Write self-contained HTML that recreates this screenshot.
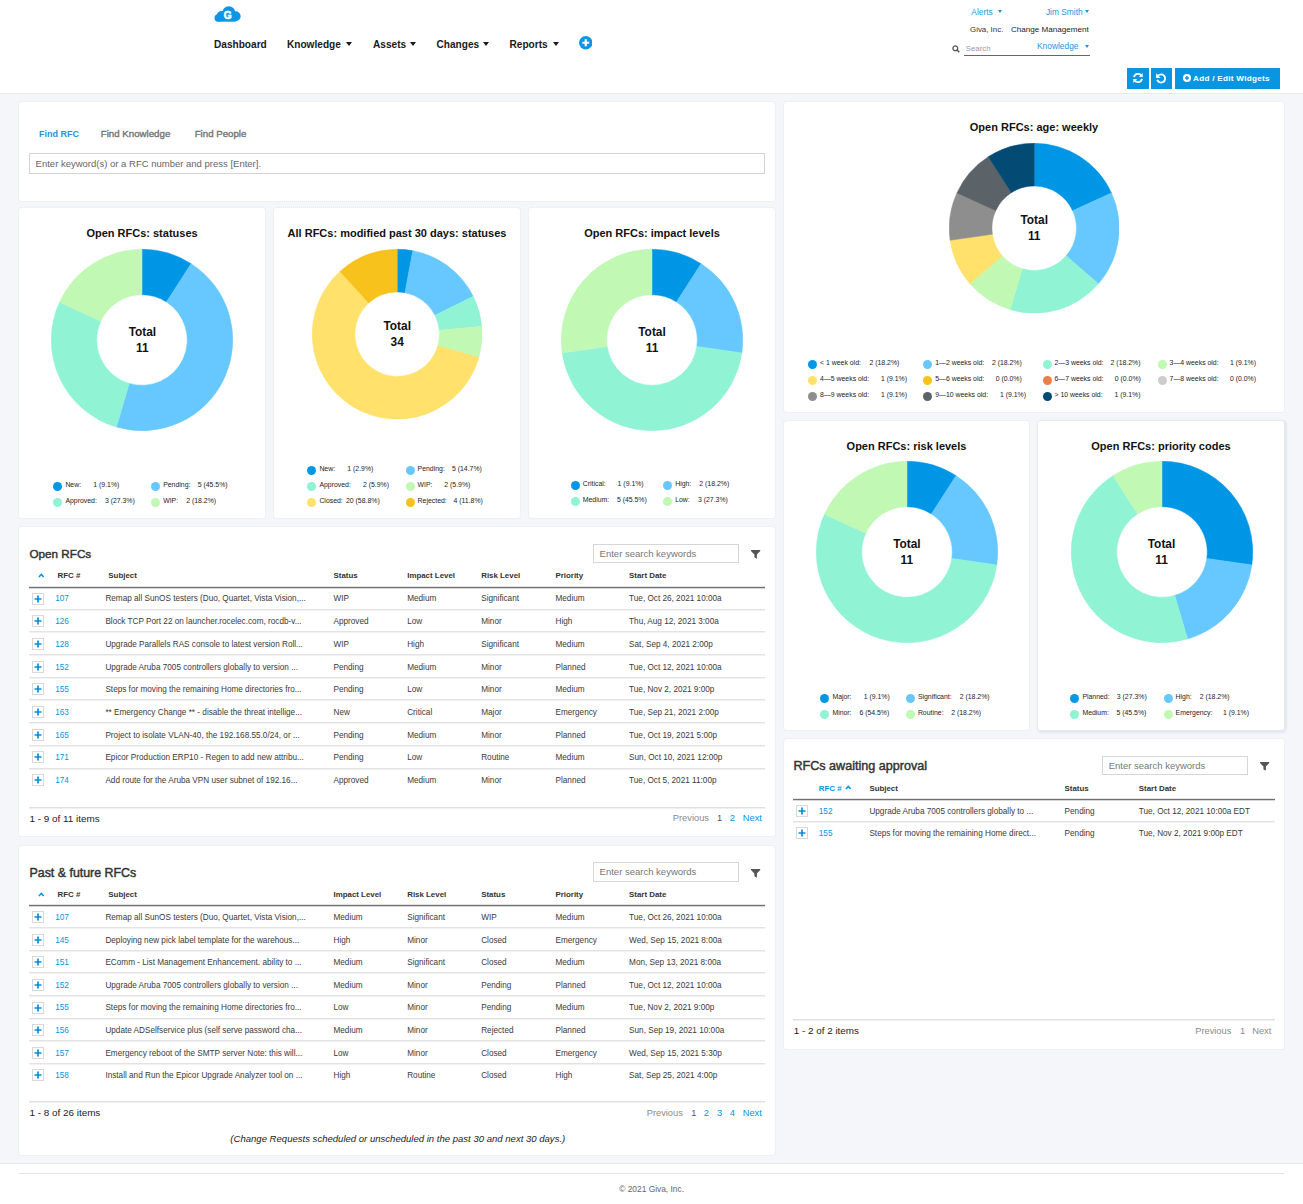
<!DOCTYPE html>
<html><head><meta charset="utf-8"><title>Giva Dashboard</title>
<style>
html,body{margin:0;padding:0;}
body{width:1303px;height:1204px;position:relative;overflow:hidden;background:#fff;font-family:"Liberation Sans",sans-serif;}
.t{position:absolute;white-space:nowrap;line-height:1;}
</style></head><body>
<div style="position:absolute;left:0;top:0;width:1303px;height:93px;background:#fff"></div><div style="position:absolute;left:0;top:93px;width:1303px;height:1px;background:#e9e9ec"></div>
<div style="position:absolute;left:0;top:94px;width:1303px;height:1069px;background:#f4f6fa"></div><div style="position:absolute;left:0;top:1163px;width:1303px;height:1px;background:#e6e7ea"></div>
<div style="position:absolute;left:18.00px;top:101.00px;width:756.00px;height:99.00px;background:#fff;background-clip:padding-box;border:1px dotted #e7eaf0;border-radius:4px;"></div>
<div style="position:absolute;left:18.00px;top:207.00px;width:246.00px;height:310.00px;background:#fff;background-clip:padding-box;border:1px dotted #e7eaf0;border-radius:4px;"></div>
<div style="position:absolute;left:273.00px;top:207.00px;width:246.00px;height:310.00px;background:#fff;background-clip:padding-box;border:1px dotted #e7eaf0;border-radius:4px;"></div>
<div style="position:absolute;left:528.00px;top:207.00px;width:246.00px;height:310.00px;background:#fff;background-clip:padding-box;border:1px dotted #e7eaf0;border-radius:4px;"></div>
<div style="position:absolute;left:783.00px;top:101.00px;width:500.00px;height:310.00px;background:#fff;background-clip:padding-box;border:1px dotted #e7eaf0;border-radius:4px;"></div>
<div style="position:absolute;left:783.00px;top:420.00px;width:245.00px;height:309.00px;background:#fff;background-clip:padding-box;border:1px dotted #e7eaf0;border-radius:4px;"></div>
<div style="position:absolute;left:1037.00px;top:420.00px;width:246.00px;height:309.00px;background:#fff;background-clip:padding-box;border:1px dotted #e7eaf0;border-radius:4px;box-shadow:1px 1px 2px 1px rgba(40,60,110,0.08);"></div>
<div style="position:absolute;left:18.00px;top:526.00px;width:756.00px;height:309.00px;background:#fff;background-clip:padding-box;border:1px dotted #e7eaf0;border-radius:4px;"></div>
<div style="position:absolute;left:18.00px;top:844.50px;width:756.00px;height:309.50px;background:#fff;background-clip:padding-box;border:1px dotted #e7eaf0;border-radius:4px;"></div>
<div style="position:absolute;left:783.00px;top:738.00px;width:500.00px;height:310.00px;background:#fff;background-clip:padding-box;border:1px dotted #e7eaf0;border-radius:4px;"></div>
<svg style="position:absolute;left:213.5px;top:6px" width="28" height="17" viewBox="0 0 28 17"><g fill="#0d95e6">
<circle cx="14.8" cy="6.6" r="6.4"/><circle cx="7.6" cy="10" r="5"/><circle cx="21.6" cy="10.3" r="5"/><circle cx="4.2" cy="12" r="3.7"/><rect x="4.2" y="8" width="17.4" height="7.7"/></g>
<text x="13.7" y="13.1" text-anchor="middle" font-family="Liberation Sans" font-weight="bold" font-size="10.2" fill="#fff" stroke="#fff" stroke-width="0.5">G</text></svg>
<div class="t" style="left:214.00px;top:40.00px;font-size:10.1px;color:#1a1a1a;font-weight:bold;">Dashboard</div>
<div class="t" style="left:287.00px;top:40.00px;font-size:10.1px;color:#1a1a1a;font-weight:bold;">Knowledge</div>
<div style="position:absolute;left:346.00px;top:42.30px;width:0;height:0;border-left:3.2px solid transparent;border-right:3.2px solid transparent;border-top:4.2px solid #1a1a1a;"></div>
<div class="t" style="left:373.00px;top:40.00px;font-size:10.1px;color:#1a1a1a;font-weight:bold;">Assets</div>
<div style="position:absolute;left:410.00px;top:42.30px;width:0;height:0;border-left:3.2px solid transparent;border-right:3.2px solid transparent;border-top:4.2px solid #1a1a1a;"></div>
<div class="t" style="left:436.50px;top:40.00px;font-size:10.1px;color:#1a1a1a;font-weight:bold;">Changes</div>
<div style="position:absolute;left:482.50px;top:42.30px;width:0;height:0;border-left:3.2px solid transparent;border-right:3.2px solid transparent;border-top:4.2px solid #1a1a1a;"></div>
<div class="t" style="left:509.50px;top:40.00px;font-size:10.1px;color:#1a1a1a;font-weight:bold;">Reports</div>
<div style="position:absolute;left:552.50px;top:42.30px;width:0;height:0;border-left:3.2px solid transparent;border-right:3.2px solid transparent;border-top:4.2px solid #1a1a1a;"></div>
<svg style="position:absolute;left:578.5px;top:36px" width="13.5" height="13.5" viewBox="0 0 13 13"><circle cx="6.5" cy="6.5" r="6.5" fill="#0d95e6"/><path d="M6.5 3.2V9.8M3.2 6.5H9.8" stroke="#fff" stroke-width="2.1"/></svg>
<div class="t" style="left:971.30px;top:8.00px;font-size:8.4px;color:#1a96e0;">Alerts</div>
<div style="position:absolute;left:998.00px;top:10.00px;width:0;height:0;border-left:2.75px solid transparent;border-right:2.75px solid transparent;border-top:3.2px solid #1a96e0;"></div>
<div class="t" style="left:1045.90px;top:8.00px;font-size:8.4px;color:#1a96e0;">Jim Smith</div>
<div style="position:absolute;left:1085.00px;top:10.00px;width:0;height:0;border-left:2.75px solid transparent;border-right:2.75px solid transparent;border-top:3.2px solid #1a96e0;"></div>
<div class="t" style="left:970.00px;top:26.00px;font-size:7.9px;color:#333;">Giva, Inc.</div>
<div class="t" style="left:1011.00px;top:26.00px;font-size:8.1px;color:#222;">Change Management</div>
<svg style="position:absolute;left:951.5px;top:45px" width="8" height="8" viewBox="0 0 8 8"><circle cx="3.3" cy="3.3" r="2.4" fill="none" stroke="#555" stroke-width="1.3"/><path d="M5.1 5.1L7.3 7.3" stroke="#555" stroke-width="1.5"/></svg>
<div class="t" style="left:965.80px;top:45.00px;font-size:7.8px;color:#9a9a9a;">Search</div>
<div class="t" style="left:1037.00px;top:42.00px;font-size:8.4px;color:#1a96e0;">Knowledge</div>
<div style="position:absolute;left:1085.00px;top:45.00px;width:0;height:0;border-left:2.75px solid transparent;border-right:2.75px solid transparent;border-top:3.2px solid #1a96e0;"></div>
<div style="position:absolute;left:964.00px;top:55.20px;width:126.00px;height:1.30px;background:#666;"></div>
<div style="position:absolute;left:1127.00px;top:68.00px;width:21.50px;height:20.50px;background:#0896e3;"></div>
<div style="position:absolute;left:1151.00px;top:68.00px;width:21.00px;height:20.50px;background:#0896e3;"></div>
<div style="position:absolute;left:1175.00px;top:68.00px;width:104.50px;height:20.50px;background:#0896e3;"></div>
<svg style="position:absolute;left:1131.5px;top:72px" width="12" height="12" viewBox="0 0 13 13"><path d="M2.2 5.6A4.4 4.4 0 0 1 10.2 4.0" fill="none" stroke="#fff" stroke-width="2"/><path d="M11.6 1.2V5.4H7.4Z" fill="#fff"/><path d="M10.8 7.4A4.4 4.4 0 0 1 2.8 9.0" fill="none" stroke="#fff" stroke-width="2"/><path d="M1.4 11.8V7.6H5.6Z" fill="#fff"/></svg>
<svg style="position:absolute;left:1155px;top:72px" width="12" height="12" viewBox="0 0 13 13"><path d="M3.2 4.2A4.4 4.4 0 1 1 2.4 8.4" fill="none" stroke="#fff" stroke-width="2"/><path d="M1.2 1.4V6.4H6.2Z" fill="#fff"/></svg>
<svg style="position:absolute;left:1182.5px;top:74px" width="8" height="8" viewBox="0 0 8 8"><circle cx="4" cy="4" r="4" fill="#fff"/><path d="M4 2V6M2 4H6" stroke="#0896e3" stroke-width="1.4"/></svg>
<div class="t" style="left:1193.00px;top:75.00px;font-size:8.1px;color:#fff;font-weight:bold;letter-spacing:0.3px;">Add / Edit Widgets</div>
<div class="t" style="left:39.00px;top:130.00px;font-size:9.0px;color:#1a96e0;font-weight:bold;">Find RFC</div>
<div class="t" style="left:100.80px;top:129.00px;font-size:9.7px;color:#737373;-webkit-text-stroke:0.35px #737373;">Find Knowledge</div>
<div class="t" style="left:194.70px;top:129.00px;font-size:9.7px;color:#737373;-webkit-text-stroke:0.35px #737373;">Find People</div>
<div style="position:absolute;left:29.00px;top:153.00px;width:736.00px;height:21.00px;border:1px solid #d4d4d4;box-sizing:border-box;"></div>
<div class="t" style="left:35.60px;top:159.00px;font-size:9.5px;color:#666;">Enter keyword(s) or a RFC number and press [Enter].</div>
<div class="t" style="left:-158.00px;width:600px;text-align:center;top:228.00px;font-size:11.0px;color:#111;font-weight:bold;">Open RFCs: statuses</div>
<svg style="position:absolute;left:51.40px;top:249.00px" width="182.00" height="182.00" viewBox="-91 -91 182 182"><path d="M0.000 -90.750A90.75 90.75 0 0 1 49.063 -76.344L24.464 -38.067A45.25 45.25 0 0 0 0.000 -45.250Z" fill="#0096e6" stroke="#0096e6" stroke-width="0.5"/><path d="M49.063 -76.344A90.75 90.75 0 0 1 -25.567 87.074L-12.748 43.417A45.25 45.25 0 0 0 24.464 -38.067Z" fill="#66c8ff" stroke="#66c8ff" stroke-width="0.5"/><path d="M-25.567 87.074A90.75 90.75 0 0 1 -82.549 -37.699L-41.161 -18.798A45.25 45.25 0 0 0 -12.748 43.417Z" fill="#90f3d4" stroke="#90f3d4" stroke-width="0.5"/><path d="M-82.549 -37.699A90.75 90.75 0 0 1 -0.000 -90.750L-0.000 -45.250A45.25 45.25 0 0 0 -41.161 -18.798Z" fill="#c1f8b4" stroke="#c1f8b4" stroke-width="0.5"/></svg>
<div class="t" style="left:-157.60px;width:600px;text-align:center;top:327.00px;font-size:11.9px;color:#111;font-weight:bold;">Total</div>
<div class="t" style="left:-157.60px;width:600px;text-align:center;top:343.00px;font-size:11.9px;color:#111;font-weight:bold;">11</div>
<div style="position:absolute;left:53.40px;top:482.10px;width:9px;height:9px;border-radius:50%;background:#0096e6"></div>
<div class="t" style="left:65.40px;top:482.00px;font-size:6.9px;color:#222;">New:</div>
<div class="t" style="left:93.30px;top:482.00px;font-size:6.9px;color:#222;">1 (9.1%)</div>
<div style="position:absolute;left:151.20px;top:482.10px;width:9px;height:9px;border-radius:50%;background:#66c8ff"></div>
<div class="t" style="left:163.20px;top:482.00px;font-size:6.9px;color:#222;">Pending:</div>
<div class="t" style="left:197.70px;top:482.00px;font-size:6.9px;color:#222;">5 (45.5%)</div>
<div style="position:absolute;left:53.40px;top:497.70px;width:9px;height:9px;border-radius:50%;background:#90f3d4"></div>
<div class="t" style="left:65.40px;top:498.00px;font-size:6.9px;color:#222;">Approved:</div>
<div class="t" style="left:104.90px;top:498.00px;font-size:6.9px;color:#222;">3 (27.3%)</div>
<div style="position:absolute;left:151.20px;top:497.70px;width:9px;height:9px;border-radius:50%;background:#c1f8b4"></div>
<div class="t" style="left:163.20px;top:498.00px;font-size:6.9px;color:#222;">WIP:</div>
<div class="t" style="left:186.20px;top:498.00px;font-size:6.9px;color:#222;">2 (18.2%)</div>
<div class="t" style="left:97.00px;width:600px;text-align:center;top:228.00px;font-size:11.0px;color:#111;font-weight:bold;">All RFCs: modified past 30 days: statuses</div>
<svg style="position:absolute;left:312.00px;top:249.10px" width="170.40" height="170.40" viewBox="-85.2 -85.2 170.4 170.4"><path d="M0.000 -84.950A84.95 84.95 0 0 1 15.610 -83.504L7.763 -41.531A42.25 42.25 0 0 0 0.000 -42.250Z" fill="#0096e6" stroke="#0096e6" stroke-width="0.5"/><path d="M15.610 -83.504A84.95 84.95 0 0 1 76.044 -37.865L37.821 -18.832A42.25 42.25 0 0 0 7.763 -41.531Z" fill="#66c8ff" stroke="#66c8ff" stroke-width="0.5"/><path d="M76.044 -37.865A84.95 84.95 0 0 1 84.588 -7.838L42.070 -3.898A42.25 42.25 0 0 0 37.821 -18.832Z" fill="#90f3d4" stroke="#90f3d4" stroke-width="0.5"/><path d="M84.588 -7.838A84.95 84.95 0 0 1 81.707 23.248L40.637 11.562A42.25 42.25 0 0 0 42.070 -3.898Z" fill="#c1f8b4" stroke="#c1f8b4" stroke-width="0.5"/><path d="M81.707 23.248A84.95 84.95 0 1 1 -57.230 -62.779L-28.464 -31.223A42.25 42.25 0 1 0 40.637 11.562Z" fill="#ffe16b" stroke="#ffe16b" stroke-width="0.5"/><path d="M-57.230 -62.779A84.95 84.95 0 0 1 -0.000 -84.950L-0.000 -42.250A42.25 42.25 0 0 0 -28.464 -31.223Z" fill="#f8c21c" stroke="#f8c21c" stroke-width="0.5"/></svg>
<div class="t" style="left:97.20px;width:600px;text-align:center;top:321.00px;font-size:11.9px;color:#111;font-weight:bold;">Total</div>
<div class="t" style="left:97.20px;width:600px;text-align:center;top:337.00px;font-size:11.9px;color:#111;font-weight:bold;">34</div>
<div style="position:absolute;left:307.40px;top:466.30px;width:9px;height:9px;border-radius:50%;background:#0096e6"></div>
<div class="t" style="left:319.40px;top:466.00px;font-size:6.9px;color:#222;">New:</div>
<div class="t" style="left:347.30px;top:466.00px;font-size:6.9px;color:#222;">1 (2.9%)</div>
<div style="position:absolute;left:405.60px;top:466.30px;width:9px;height:9px;border-radius:50%;background:#66c8ff"></div>
<div class="t" style="left:417.60px;top:466.00px;font-size:6.9px;color:#222;">Pending:</div>
<div class="t" style="left:452.00px;top:466.00px;font-size:6.9px;color:#222;">5 (14.7%)</div>
<div style="position:absolute;left:307.40px;top:482.00px;width:9px;height:9px;border-radius:50%;background:#90f3d4"></div>
<div class="t" style="left:319.40px;top:482.00px;font-size:6.9px;color:#222;">Approved:</div>
<div class="t" style="left:363.00px;top:482.00px;font-size:6.9px;color:#222;">2 (5.9%)</div>
<div style="position:absolute;left:405.60px;top:482.00px;width:9px;height:9px;border-radius:50%;background:#c1f8b4"></div>
<div class="t" style="left:417.60px;top:482.00px;font-size:6.9px;color:#222;">WIP:</div>
<div class="t" style="left:444.30px;top:482.00px;font-size:6.9px;color:#222;">2 (5.9%)</div>
<div style="position:absolute;left:307.40px;top:497.80px;width:9px;height:9px;border-radius:50%;background:#ffe16b"></div>
<div class="t" style="left:319.40px;top:498.00px;font-size:6.9px;color:#222;">Closed:</div>
<div class="t" style="left:346.00px;top:498.00px;font-size:6.9px;color:#222;">20 (58.8%)</div>
<div style="position:absolute;left:405.60px;top:497.80px;width:9px;height:9px;border-radius:50%;background:#f8c21c"></div>
<div class="t" style="left:417.60px;top:498.00px;font-size:6.9px;color:#222;">Rejected:</div>
<div class="t" style="left:453.50px;top:498.00px;font-size:6.9px;color:#222;">4 (11.8%)</div>
<div class="t" style="left:352.00px;width:600px;text-align:center;top:228.00px;font-size:11.0px;color:#111;font-weight:bold;">Open RFCs: impact levels</div>
<svg style="position:absolute;left:561.00px;top:249.00px" width="182.00" height="182.00" viewBox="-91 -91 182 182"><path d="M0.000 -90.750A90.75 90.75 0 0 1 49.063 -76.344L24.464 -38.067A45.25 45.25 0 0 0 0.000 -45.250Z" fill="#0096e6" stroke="#0096e6" stroke-width="0.5"/><path d="M49.063 -76.344A90.75 90.75 0 0 1 89.826 12.915L44.789 6.440A45.25 45.25 0 0 0 24.464 -38.067Z" fill="#66c8ff" stroke="#66c8ff" stroke-width="0.5"/><path d="M89.826 12.915A90.75 90.75 0 0 1 -89.826 12.915L-44.789 6.440A45.25 45.25 0 0 0 44.789 6.440Z" fill="#90f3d4" stroke="#90f3d4" stroke-width="0.5"/><path d="M-89.826 12.915A90.75 90.75 0 0 1 -0.000 -90.750L-0.000 -45.250A45.25 45.25 0 0 0 -44.789 6.440Z" fill="#c1f8b4" stroke="#c1f8b4" stroke-width="0.5"/></svg>
<div class="t" style="left:352.00px;width:600px;text-align:center;top:327.00px;font-size:11.9px;color:#111;font-weight:bold;">Total</div>
<div class="t" style="left:352.00px;width:600px;text-align:center;top:343.00px;font-size:11.9px;color:#111;font-weight:bold;">11</div>
<div style="position:absolute;left:570.80px;top:481.30px;width:9px;height:9px;border-radius:50%;background:#0096e6"></div>
<div class="t" style="left:582.80px;top:481.00px;font-size:6.9px;color:#222;">Critical:</div>
<div class="t" style="left:617.60px;top:481.00px;font-size:6.9px;color:#222;">1 (9.1%)</div>
<div style="position:absolute;left:663.20px;top:481.30px;width:9px;height:9px;border-radius:50%;background:#66c8ff"></div>
<div class="t" style="left:675.20px;top:481.00px;font-size:6.9px;color:#222;">High:</div>
<div class="t" style="left:699.30px;top:481.00px;font-size:6.9px;color:#222;">2 (18.2%)</div>
<div style="position:absolute;left:570.80px;top:497.00px;width:9px;height:9px;border-radius:50%;background:#90f3d4"></div>
<div class="t" style="left:582.80px;top:497.00px;font-size:6.9px;color:#222;">Medium:</div>
<div class="t" style="left:616.90px;top:497.00px;font-size:6.9px;color:#222;">5 (45.5%)</div>
<div style="position:absolute;left:663.20px;top:497.00px;width:9px;height:9px;border-radius:50%;background:#c1f8b4"></div>
<div class="t" style="left:675.20px;top:497.00px;font-size:6.9px;color:#222;">Low:</div>
<div class="t" style="left:698.00px;top:497.00px;font-size:6.9px;color:#222;">3 (27.3%)</div>
<div class="t" style="left:734.00px;width:600px;text-align:center;top:122.00px;font-size:11.0px;color:#111;font-weight:bold;">Open RFCs: age: weekly</div>
<svg style="position:absolute;left:949.00px;top:143.10px" width="170.40" height="170.40" viewBox="-85.2 -85.2 170.4 170.4"><path d="M0.000 -84.950A84.95 84.95 0 0 1 77.273 -35.290L38.432 -17.551A42.25 42.25 0 0 0 0.000 -42.250Z" fill="#0096e6" stroke="#0096e6" stroke-width="0.5"/><path d="M77.273 -35.290A84.95 84.95 0 0 1 64.201 55.630L31.930 27.668A42.25 42.25 0 0 0 38.432 -17.551Z" fill="#66c8ff" stroke="#66c8ff" stroke-width="0.5"/><path d="M64.201 55.630A84.95 84.95 0 0 1 -23.933 81.509L-11.903 40.539A42.25 42.25 0 0 0 31.930 27.668Z" fill="#90f3d4" stroke="#90f3d4" stroke-width="0.5"/><path d="M-23.933 81.509A84.95 84.95 0 0 1 -64.201 55.630L-31.930 27.668A42.25 42.25 0 0 0 -11.903 40.539Z" fill="#c1f8b4" stroke="#c1f8b4" stroke-width="0.5"/><path d="M-64.201 55.630A84.95 84.95 0 0 1 -84.085 12.090L-41.820 6.013A42.25 42.25 0 0 0 -31.930 27.668Z" fill="#ffe16b" stroke="#ffe16b" stroke-width="0.5"/><path d="M-84.085 12.090A84.95 84.95 0 0 1 -77.273 -35.290L-38.432 -17.551A42.25 42.25 0 0 0 -41.820 6.013Z" fill="#8e8e8e" stroke="#8e8e8e" stroke-width="0.5"/><path d="M-77.273 -35.290A84.95 84.95 0 0 1 -45.927 -71.464L-22.842 -35.543A42.25 42.25 0 0 0 -38.432 -17.551Z" fill="#5b6368" stroke="#5b6368" stroke-width="0.5"/><path d="M-45.927 -71.464A84.95 84.95 0 0 1 -0.000 -84.950L-0.000 -42.250A42.25 42.25 0 0 0 -22.842 -35.543Z" fill="#034b75" stroke="#034b75" stroke-width="0.5"/></svg>
<div class="t" style="left:734.20px;width:600px;text-align:center;top:215.00px;font-size:11.9px;color:#111;font-weight:bold;">Total</div>
<div class="t" style="left:734.20px;width:600px;text-align:center;top:231.00px;font-size:11.9px;color:#111;font-weight:bold;">11</div>
<div style="position:absolute;left:808.10px;top:359.90px;width:9px;height:9px;border-radius:50%;background:#0096e6"></div>
<div class="t" style="left:820.10px;top:360.00px;font-size:6.9px;color:#222;">&lt; 1 week old:</div>
<div class="t" style="left:869.50px;top:360.00px;font-size:6.9px;color:#222;">2 (18.2%)</div>
<div style="position:absolute;left:923.20px;top:359.90px;width:9px;height:9px;border-radius:50%;background:#66c8ff"></div>
<div class="t" style="left:935.20px;top:360.00px;font-size:6.9px;color:#222;">1—2 weeks old:</div>
<div class="t" style="left:991.90px;top:360.00px;font-size:6.9px;color:#222;">2 (18.2%)</div>
<div style="position:absolute;left:1042.50px;top:359.90px;width:9px;height:9px;border-radius:50%;background:#90f3d4"></div>
<div class="t" style="left:1054.50px;top:360.00px;font-size:6.9px;color:#222;">2—3 weeks old:</div>
<div class="t" style="left:1110.60px;top:360.00px;font-size:6.9px;color:#222;">2 (18.2%)</div>
<div style="position:absolute;left:1157.60px;top:359.90px;width:9px;height:9px;border-radius:50%;background:#c1f8b4"></div>
<div class="t" style="left:1169.60px;top:360.00px;font-size:6.9px;color:#222;">3—4 weeks old:</div>
<div class="t" style="left:1229.90px;top:360.00px;font-size:6.9px;color:#222;">1 (9.1%)</div>
<div style="position:absolute;left:808.10px;top:375.60px;width:9px;height:9px;border-radius:50%;background:#ffe16b"></div>
<div class="t" style="left:820.10px;top:376.00px;font-size:6.9px;color:#222;">4—5 weeks old:</div>
<div class="t" style="left:881.00px;top:376.00px;font-size:6.9px;color:#222;">1 (9.1%)</div>
<div style="position:absolute;left:923.20px;top:375.60px;width:9px;height:9px;border-radius:50%;background:#f8c21c"></div>
<div class="t" style="left:935.20px;top:376.00px;font-size:6.9px;color:#222;">5—6 weeks old:</div>
<div class="t" style="left:995.70px;top:376.00px;font-size:6.9px;color:#222;">0 (0.0%)</div>
<div style="position:absolute;left:1042.50px;top:375.60px;width:9px;height:9px;border-radius:50%;background:#ef7d4b"></div>
<div class="t" style="left:1054.50px;top:376.00px;font-size:6.9px;color:#222;">6—7 weeks old:</div>
<div class="t" style="left:1114.80px;top:376.00px;font-size:6.9px;color:#222;">0 (0.0%)</div>
<div style="position:absolute;left:1157.60px;top:375.60px;width:9px;height:9px;border-radius:50%;background:#cdcdcd"></div>
<div class="t" style="left:1169.60px;top:376.00px;font-size:6.9px;color:#222;">7—8 weeks old:</div>
<div class="t" style="left:1229.90px;top:376.00px;font-size:6.9px;color:#222;">0 (0.0%)</div>
<div style="position:absolute;left:808.10px;top:391.50px;width:9px;height:9px;border-radius:50%;background:#8e8e8e"></div>
<div class="t" style="left:820.10px;top:392.00px;font-size:6.9px;color:#222;">8—9 weeks old:</div>
<div class="t" style="left:881.00px;top:392.00px;font-size:6.9px;color:#222;">1 (9.1%)</div>
<div style="position:absolute;left:923.20px;top:391.50px;width:9px;height:9px;border-radius:50%;background:#5b6368"></div>
<div class="t" style="left:935.20px;top:392.00px;font-size:6.9px;color:#222;">9—10 weeks old:</div>
<div class="t" style="left:999.90px;top:392.00px;font-size:6.9px;color:#222;">1 (9.1%)</div>
<div style="position:absolute;left:1042.50px;top:391.50px;width:9px;height:9px;border-radius:50%;background:#034b75"></div>
<div class="t" style="left:1054.50px;top:392.00px;font-size:6.9px;color:#222;">&gt; 10 weeks old:</div>
<div class="t" style="left:1114.40px;top:392.00px;font-size:6.9px;color:#222;">1 (9.1%)</div>
<div class="t" style="left:606.50px;width:600px;text-align:center;top:441.00px;font-size:11.0px;color:#111;font-weight:bold;">Open RFCs: risk levels</div>
<svg style="position:absolute;left:815.90px;top:461.30px" width="182.00" height="182.00" viewBox="-91 -91 182 182"><path d="M0.000 -90.750A90.75 90.75 0 0 1 49.063 -76.344L24.464 -38.067A45.25 45.25 0 0 0 0.000 -45.250Z" fill="#0096e6" stroke="#0096e6" stroke-width="0.5"/><path d="M49.063 -76.344A90.75 90.75 0 0 1 89.826 12.915L44.789 6.440A45.25 45.25 0 0 0 24.464 -38.067Z" fill="#66c8ff" stroke="#66c8ff" stroke-width="0.5"/><path d="M89.826 12.915A90.75 90.75 0 1 1 -82.549 -37.699L-41.161 -18.798A45.25 45.25 0 1 0 44.789 6.440Z" fill="#90f3d4" stroke="#90f3d4" stroke-width="0.5"/><path d="M-82.549 -37.699A90.75 90.75 0 0 1 -0.000 -90.750L-0.000 -45.250A45.25 45.25 0 0 0 -41.161 -18.798Z" fill="#c1f8b4" stroke="#c1f8b4" stroke-width="0.5"/></svg>
<div class="t" style="left:606.90px;width:600px;text-align:center;top:539.00px;font-size:11.9px;color:#111;font-weight:bold;">Total</div>
<div class="t" style="left:606.90px;width:600px;text-align:center;top:555.00px;font-size:11.9px;color:#111;font-weight:bold;">11</div>
<div style="position:absolute;left:820.40px;top:694.30px;width:9px;height:9px;border-radius:50%;background:#0096e6"></div>
<div class="t" style="left:832.40px;top:694.00px;font-size:6.9px;color:#222;">Major:</div>
<div class="t" style="left:863.70px;top:694.00px;font-size:6.9px;color:#222;">1 (9.1%)</div>
<div style="position:absolute;left:905.90px;top:694.30px;width:9px;height:9px;border-radius:50%;background:#66c8ff"></div>
<div class="t" style="left:917.90px;top:694.00px;font-size:6.9px;color:#222;">Significant:</div>
<div class="t" style="left:959.70px;top:694.00px;font-size:6.9px;color:#222;">2 (18.2%)</div>
<div style="position:absolute;left:820.40px;top:710.00px;width:9px;height:9px;border-radius:50%;background:#90f3d4"></div>
<div class="t" style="left:832.40px;top:710.00px;font-size:6.9px;color:#222;">Minor:</div>
<div class="t" style="left:859.40px;top:710.00px;font-size:6.9px;color:#222;">6 (54.5%)</div>
<div style="position:absolute;left:905.90px;top:710.00px;width:9px;height:9px;border-radius:50%;background:#c1f8b4"></div>
<div class="t" style="left:917.90px;top:710.00px;font-size:6.9px;color:#222;">Routine:</div>
<div class="t" style="left:951.20px;top:710.00px;font-size:6.9px;color:#222;">2 (18.2%)</div>
<div class="t" style="left:861.00px;width:600px;text-align:center;top:441.00px;font-size:11.0px;color:#111;font-weight:bold;">Open RFCs: priority codes</div>
<svg style="position:absolute;left:1070.50px;top:461.30px" width="182.00" height="182.00" viewBox="-91 -91 182 182"><path d="M0.000 -90.750A90.75 90.75 0 0 1 89.826 12.915L44.789 6.440A45.25 45.25 0 0 0 0.000 -45.250Z" fill="#0096e6" stroke="#0096e6" stroke-width="0.5"/><path d="M89.826 12.915A90.75 90.75 0 0 1 25.567 87.074L12.748 43.417A45.25 45.25 0 0 0 44.789 6.440Z" fill="#66c8ff" stroke="#66c8ff" stroke-width="0.5"/><path d="M25.567 87.074A90.75 90.75 0 0 1 -49.063 -76.344L-24.464 -38.067A45.25 45.25 0 0 0 12.748 43.417Z" fill="#90f3d4" stroke="#90f3d4" stroke-width="0.5"/><path d="M-49.063 -76.344A90.75 90.75 0 0 1 -0.000 -90.750L-0.000 -45.250A45.25 45.25 0 0 0 -24.464 -38.067Z" fill="#c1f8b4" stroke="#c1f8b4" stroke-width="0.5"/></svg>
<div class="t" style="left:861.50px;width:600px;text-align:center;top:539.00px;font-size:11.9px;color:#111;font-weight:bold;">Total</div>
<div class="t" style="left:861.50px;width:600px;text-align:center;top:555.00px;font-size:11.9px;color:#111;font-weight:bold;">11</div>
<div style="position:absolute;left:1070.40px;top:694.30px;width:9px;height:9px;border-radius:50%;background:#0096e6"></div>
<div class="t" style="left:1082.40px;top:694.00px;font-size:6.9px;color:#222;">Planned:</div>
<div class="t" style="left:1116.80px;top:694.00px;font-size:6.9px;color:#222;">3 (27.3%)</div>
<div style="position:absolute;left:1163.60px;top:694.30px;width:9px;height:9px;border-radius:50%;background:#66c8ff"></div>
<div class="t" style="left:1175.60px;top:694.00px;font-size:6.9px;color:#222;">High:</div>
<div class="t" style="left:1199.70px;top:694.00px;font-size:6.9px;color:#222;">2 (18.2%)</div>
<div style="position:absolute;left:1070.40px;top:710.00px;width:9px;height:9px;border-radius:50%;background:#90f3d4"></div>
<div class="t" style="left:1082.40px;top:710.00px;font-size:6.9px;color:#222;">Medium:</div>
<div class="t" style="left:1116.50px;top:710.00px;font-size:6.9px;color:#222;">5 (45.5%)</div>
<div style="position:absolute;left:1163.60px;top:710.00px;width:9px;height:9px;border-radius:50%;background:#c1f8b4"></div>
<div class="t" style="left:1175.60px;top:710.00px;font-size:6.9px;color:#222;">Emergency:</div>
<div class="t" style="left:1223.00px;top:710.00px;font-size:6.9px;color:#222;">1 (9.1%)</div>
<div class="t" style="left:29.50px;top:548.00px;font-size:11.7px;color:#333;-webkit-text-stroke:0.45px #333;">Open RFCs</div>
<div style="position:absolute;left:592.60px;top:543.90px;width:146.00px;height:19.60px;border:1px solid #d6d6d6;box-sizing:border-box;background:#fff;"></div>
<div class="t" style="left:599.60px;top:549.00px;font-size:9.5px;color:#777;">Enter search keywords</div>
<svg style="position:absolute;left:751.00px;top:550.00px" width="10" height="9" viewBox="0 0 10 9"><path d="M0 0H9.2V1L5.9 4.4V8.8L3.4 7.3V4.4L0 1Z" fill="#555"/></svg>
<svg style="position:absolute;left:38.30px;top:573.00px" width="7" height="5" viewBox="0 0 7 5"><path d="M0.9 3.9L3.3 1.4L5.7 3.9" fill="none" stroke="#0096e6" stroke-width="1.5"/></svg>
<div class="t" style="left:57.60px;top:572.00px;font-size:7.9px;color:#333;font-weight:bold;">RFC #</div>
<div class="t" style="left:108.30px;top:572.00px;font-size:7.9px;color:#333;font-weight:bold;">Subject</div>
<div class="t" style="left:333.50px;top:572.00px;font-size:7.9px;color:#333;font-weight:bold;">Status</div>
<div class="t" style="left:407.20px;top:572.00px;font-size:7.9px;color:#333;font-weight:bold;">Impact Level</div>
<div class="t" style="left:481.20px;top:572.00px;font-size:7.9px;color:#333;font-weight:bold;">Risk Level</div>
<div class="t" style="left:555.50px;top:572.00px;font-size:7.9px;color:#333;font-weight:bold;">Priority</div>
<div class="t" style="left:629.10px;top:572.00px;font-size:7.9px;color:#333;font-weight:bold;">Start Date</div>
<div style="position:absolute;left:29.00px;top:587.00px;width:736.00px;height:1.00px;background:#707070;"></div>
<div style="position:absolute;left:29.00px;top:586.00px;width:736.00px;height:1.00px;background:#e4e4e4;"></div>
<div style="position:absolute;left:29.00px;top:588.00px;width:736.00px;height:1.00px;background:#d6d6d6;"></div>
<div style="position:absolute;left:32.00px;top:592.50px;width:12px;height:12px;box-sizing:border-box;border:1px solid #d9d9d9;background:#fff"></div>
<svg style="position:absolute;left:34.00px;top:594.50px" width="8" height="8" viewBox="0 0 8 8"><path d="M4 0.5V7.5M0.5 4H7.5" stroke="#0a8ee0" stroke-width="1.7"/></svg>
<div class="t" style="left:55.20px;top:595.00px;font-size:8.2px;color:#0096e6;">107</div>
<div class="t" style="left:105.40px;top:595.00px;font-size:8.2px;color:#3a3a3a;">Remap all SunOS testers (Duo, Quartet, Vista Vision,...</div>
<div class="t" style="left:333.50px;top:595.00px;font-size:8.2px;color:#3a3a3a;">WIP</div>
<div class="t" style="left:407.20px;top:595.00px;font-size:8.2px;color:#3a3a3a;">Medium</div>
<div class="t" style="left:481.20px;top:595.00px;font-size:8.2px;color:#3a3a3a;">Significant</div>
<div class="t" style="left:555.50px;top:595.00px;font-size:8.2px;color:#3a3a3a;">Medium</div>
<div class="t" style="left:629.10px;top:595.00px;font-size:8.2px;color:#3a3a3a;">Tue, Oct 26, 2021 10:00a</div>
<div style="position:absolute;left:29.00px;top:609.00px;width:736.00px;height:1.00px;background:#e3e3e3;"></div>
<div style="position:absolute;left:29.00px;top:610.00px;width:736.00px;height:1.00px;background:#f1f1f1;"></div>
<div style="position:absolute;left:32.00px;top:615.21px;width:12px;height:12px;box-sizing:border-box;border:1px solid #d9d9d9;background:#fff"></div>
<svg style="position:absolute;left:34.00px;top:617.21px" width="8" height="8" viewBox="0 0 8 8"><path d="M4 0.5V7.5M0.5 4H7.5" stroke="#0a8ee0" stroke-width="1.7"/></svg>
<div class="t" style="left:55.20px;top:618.00px;font-size:8.2px;color:#0096e6;">126</div>
<div class="t" style="left:105.40px;top:618.00px;font-size:8.2px;color:#3a3a3a;">Block TCP Port 22 on launcher.rocelec.com, rocdb-v...</div>
<div class="t" style="left:333.50px;top:618.00px;font-size:8.2px;color:#3a3a3a;">Approved</div>
<div class="t" style="left:407.20px;top:618.00px;font-size:8.2px;color:#3a3a3a;">Low</div>
<div class="t" style="left:481.20px;top:618.00px;font-size:8.2px;color:#3a3a3a;">Minor</div>
<div class="t" style="left:555.50px;top:618.00px;font-size:8.2px;color:#3a3a3a;">High</div>
<div class="t" style="left:629.10px;top:618.00px;font-size:8.2px;color:#3a3a3a;">Thu, Aug 12, 2021 3:00a</div>
<div style="position:absolute;left:29.00px;top:631.00px;width:736.00px;height:1.00px;background:#e3e3e3;"></div>
<div style="position:absolute;left:29.00px;top:632.00px;width:736.00px;height:1.00px;background:#f1f1f1;"></div>
<div style="position:absolute;left:32.00px;top:637.92px;width:12px;height:12px;box-sizing:border-box;border:1px solid #d9d9d9;background:#fff"></div>
<svg style="position:absolute;left:34.00px;top:639.92px" width="8" height="8" viewBox="0 0 8 8"><path d="M4 0.5V7.5M0.5 4H7.5" stroke="#0a8ee0" stroke-width="1.7"/></svg>
<div class="t" style="left:55.20px;top:641.00px;font-size:8.2px;color:#0096e6;">128</div>
<div class="t" style="left:105.40px;top:641.00px;font-size:8.2px;color:#3a3a3a;">Upgrade Parallels RAS console to latest version Roll...</div>
<div class="t" style="left:333.50px;top:641.00px;font-size:8.2px;color:#3a3a3a;">WIP</div>
<div class="t" style="left:407.20px;top:641.00px;font-size:8.2px;color:#3a3a3a;">High</div>
<div class="t" style="left:481.20px;top:641.00px;font-size:8.2px;color:#3a3a3a;">Significant</div>
<div class="t" style="left:555.50px;top:641.00px;font-size:8.2px;color:#3a3a3a;">Medium</div>
<div class="t" style="left:629.10px;top:641.00px;font-size:8.2px;color:#3a3a3a;">Sat, Sep 4, 2021 2:00p</div>
<div style="position:absolute;left:29.00px;top:654.00px;width:736.00px;height:1.00px;background:#e3e3e3;"></div>
<div style="position:absolute;left:29.00px;top:655.00px;width:736.00px;height:1.00px;background:#f1f1f1;"></div>
<div style="position:absolute;left:32.00px;top:660.63px;width:12px;height:12px;box-sizing:border-box;border:1px solid #d9d9d9;background:#fff"></div>
<svg style="position:absolute;left:34.00px;top:662.63px" width="8" height="8" viewBox="0 0 8 8"><path d="M4 0.5V7.5M0.5 4H7.5" stroke="#0a8ee0" stroke-width="1.7"/></svg>
<div class="t" style="left:55.20px;top:664.00px;font-size:8.2px;color:#0096e6;">152</div>
<div class="t" style="left:105.40px;top:664.00px;font-size:8.2px;color:#3a3a3a;">Upgrade Aruba 7005 controllers globally to version ...</div>
<div class="t" style="left:333.50px;top:664.00px;font-size:8.2px;color:#3a3a3a;">Pending</div>
<div class="t" style="left:407.20px;top:664.00px;font-size:8.2px;color:#3a3a3a;">Medium</div>
<div class="t" style="left:481.20px;top:664.00px;font-size:8.2px;color:#3a3a3a;">Minor</div>
<div class="t" style="left:555.50px;top:664.00px;font-size:8.2px;color:#3a3a3a;">Planned</div>
<div class="t" style="left:629.10px;top:664.00px;font-size:8.2px;color:#3a3a3a;">Tue, Oct 12, 2021 10:00a</div>
<div style="position:absolute;left:29.00px;top:677.00px;width:736.00px;height:1.00px;background:#e3e3e3;"></div>
<div style="position:absolute;left:29.00px;top:678.00px;width:736.00px;height:1.00px;background:#f1f1f1;"></div>
<div style="position:absolute;left:32.00px;top:683.34px;width:12px;height:12px;box-sizing:border-box;border:1px solid #d9d9d9;background:#fff"></div>
<svg style="position:absolute;left:34.00px;top:685.34px" width="8" height="8" viewBox="0 0 8 8"><path d="M4 0.5V7.5M0.5 4H7.5" stroke="#0a8ee0" stroke-width="1.7"/></svg>
<div class="t" style="left:55.20px;top:686.00px;font-size:8.2px;color:#0096e6;">155</div>
<div class="t" style="left:105.40px;top:686.00px;font-size:8.2px;color:#3a3a3a;">Steps for moving the remaining Home directories fro...</div>
<div class="t" style="left:333.50px;top:686.00px;font-size:8.2px;color:#3a3a3a;">Pending</div>
<div class="t" style="left:407.20px;top:686.00px;font-size:8.2px;color:#3a3a3a;">Low</div>
<div class="t" style="left:481.20px;top:686.00px;font-size:8.2px;color:#3a3a3a;">Minor</div>
<div class="t" style="left:555.50px;top:686.00px;font-size:8.2px;color:#3a3a3a;">Medium</div>
<div class="t" style="left:629.10px;top:686.00px;font-size:8.2px;color:#3a3a3a;">Tue, Nov 2, 2021 9:00p</div>
<div style="position:absolute;left:29.00px;top:699.00px;width:736.00px;height:1.00px;background:#e3e3e3;"></div>
<div style="position:absolute;left:29.00px;top:700.00px;width:736.00px;height:1.00px;background:#f1f1f1;"></div>
<div style="position:absolute;left:32.00px;top:706.05px;width:12px;height:12px;box-sizing:border-box;border:1px solid #d9d9d9;background:#fff"></div>
<svg style="position:absolute;left:34.00px;top:708.05px" width="8" height="8" viewBox="0 0 8 8"><path d="M4 0.5V7.5M0.5 4H7.5" stroke="#0a8ee0" stroke-width="1.7"/></svg>
<div class="t" style="left:55.20px;top:709.00px;font-size:8.2px;color:#0096e6;">163</div>
<div class="t" style="left:105.40px;top:709.00px;font-size:8.2px;color:#3a3a3a;">** Emergency Change ** - disable the threat intellige...</div>
<div class="t" style="left:333.50px;top:709.00px;font-size:8.2px;color:#3a3a3a;">New</div>
<div class="t" style="left:407.20px;top:709.00px;font-size:8.2px;color:#3a3a3a;">Critical</div>
<div class="t" style="left:481.20px;top:709.00px;font-size:8.2px;color:#3a3a3a;">Major</div>
<div class="t" style="left:555.50px;top:709.00px;font-size:8.2px;color:#3a3a3a;">Emergency</div>
<div class="t" style="left:629.10px;top:709.00px;font-size:8.2px;color:#3a3a3a;">Tue, Sep 21, 2021 2:00p</div>
<div style="position:absolute;left:29.00px;top:722.00px;width:736.00px;height:1.00px;background:#e3e3e3;"></div>
<div style="position:absolute;left:29.00px;top:723.00px;width:736.00px;height:1.00px;background:#f1f1f1;"></div>
<div style="position:absolute;left:32.00px;top:728.76px;width:12px;height:12px;box-sizing:border-box;border:1px solid #d9d9d9;background:#fff"></div>
<svg style="position:absolute;left:34.00px;top:730.76px" width="8" height="8" viewBox="0 0 8 8"><path d="M4 0.5V7.5M0.5 4H7.5" stroke="#0a8ee0" stroke-width="1.7"/></svg>
<div class="t" style="left:55.20px;top:732.00px;font-size:8.2px;color:#0096e6;">165</div>
<div class="t" style="left:105.40px;top:732.00px;font-size:8.2px;color:#3a3a3a;">Project to isolate VLAN-40, the 192.168.55.0/24, or ...</div>
<div class="t" style="left:333.50px;top:732.00px;font-size:8.2px;color:#3a3a3a;">Pending</div>
<div class="t" style="left:407.20px;top:732.00px;font-size:8.2px;color:#3a3a3a;">Medium</div>
<div class="t" style="left:481.20px;top:732.00px;font-size:8.2px;color:#3a3a3a;">Minor</div>
<div class="t" style="left:555.50px;top:732.00px;font-size:8.2px;color:#3a3a3a;">Planned</div>
<div class="t" style="left:629.10px;top:732.00px;font-size:8.2px;color:#3a3a3a;">Tue, Oct 19, 2021 5:00p</div>
<div style="position:absolute;left:29.00px;top:745.00px;width:736.00px;height:1.00px;background:#e3e3e3;"></div>
<div style="position:absolute;left:29.00px;top:746.00px;width:736.00px;height:1.00px;background:#f1f1f1;"></div>
<div style="position:absolute;left:32.00px;top:751.47px;width:12px;height:12px;box-sizing:border-box;border:1px solid #d9d9d9;background:#fff"></div>
<svg style="position:absolute;left:34.00px;top:753.47px" width="8" height="8" viewBox="0 0 8 8"><path d="M4 0.5V7.5M0.5 4H7.5" stroke="#0a8ee0" stroke-width="1.7"/></svg>
<div class="t" style="left:55.20px;top:754.00px;font-size:8.2px;color:#0096e6;">171</div>
<div class="t" style="left:105.40px;top:754.00px;font-size:8.2px;color:#3a3a3a;">Epicor Production ERP10 - Regen to add new attribu...</div>
<div class="t" style="left:333.50px;top:754.00px;font-size:8.2px;color:#3a3a3a;">Pending</div>
<div class="t" style="left:407.20px;top:754.00px;font-size:8.2px;color:#3a3a3a;">Low</div>
<div class="t" style="left:481.20px;top:754.00px;font-size:8.2px;color:#3a3a3a;">Routine</div>
<div class="t" style="left:555.50px;top:754.00px;font-size:8.2px;color:#3a3a3a;">Medium</div>
<div class="t" style="left:629.10px;top:754.00px;font-size:8.2px;color:#3a3a3a;">Sun, Oct 10, 2021 12:00p</div>
<div style="position:absolute;left:29.00px;top:768.00px;width:736.00px;height:1.00px;background:#e3e3e3;"></div>
<div style="position:absolute;left:29.00px;top:769.00px;width:736.00px;height:1.00px;background:#f1f1f1;"></div>
<div style="position:absolute;left:32.00px;top:774.18px;width:12px;height:12px;box-sizing:border-box;border:1px solid #d9d9d9;background:#fff"></div>
<svg style="position:absolute;left:34.00px;top:776.18px" width="8" height="8" viewBox="0 0 8 8"><path d="M4 0.5V7.5M0.5 4H7.5" stroke="#0a8ee0" stroke-width="1.7"/></svg>
<div class="t" style="left:55.20px;top:777.00px;font-size:8.2px;color:#0096e6;">174</div>
<div class="t" style="left:105.40px;top:777.00px;font-size:8.2px;color:#3a3a3a;">Add route for the Aruba VPN user subnet of 192.16...</div>
<div class="t" style="left:333.50px;top:777.00px;font-size:8.2px;color:#3a3a3a;">Approved</div>
<div class="t" style="left:407.20px;top:777.00px;font-size:8.2px;color:#3a3a3a;">Medium</div>
<div class="t" style="left:481.20px;top:777.00px;font-size:8.2px;color:#3a3a3a;">Minor</div>
<div class="t" style="left:555.50px;top:777.00px;font-size:8.2px;color:#3a3a3a;">Planned</div>
<div class="t" style="left:629.10px;top:777.00px;font-size:8.2px;color:#3a3a3a;">Tue, Oct 5, 2021 11:00p</div>
<div style="position:absolute;left:29.00px;top:807.00px;width:736.00px;height:1.00px;background:#e0e0e0;"></div>
<div style="position:absolute;left:29.00px;top:808.00px;width:736.00px;height:1.00px;background:#f0f0f0;"></div>
<div class="t" style="left:29.50px;top:814.00px;font-size:9.9px;color:#222;">1 - 9 of 11 items</div>
<div class="t" style="left:672.80px;top:814.00px;font-size:9.3px;color:#8a8a8a;">Previous</div>
<div class="t" style="left:717.10px;top:814.00px;font-size:9.3px;color:#555;">1</div>
<div class="t" style="left:729.70px;top:814.00px;font-size:9.3px;color:#0096e6;">2</div>
<div class="t" style="left:742.80px;top:814.00px;font-size:9.3px;color:#0096e6;">Next</div>
<div class="t" style="left:29.50px;top:867.00px;font-size:12.4px;color:#333;-webkit-text-stroke:0.45px #333;">Past &amp; future RFCs</div>
<div style="position:absolute;left:592.60px;top:862.40px;width:146.00px;height:19.60px;border:1px solid #d6d6d6;box-sizing:border-box;background:#fff;"></div>
<div class="t" style="left:599.60px;top:867.00px;font-size:9.5px;color:#777;">Enter search keywords</div>
<svg style="position:absolute;left:751.00px;top:868.50px" width="10" height="9" viewBox="0 0 10 9"><path d="M0 0H9.2V1L5.9 4.4V8.8L3.4 7.3V4.4L0 1Z" fill="#555"/></svg>
<svg style="position:absolute;left:38.30px;top:891.50px" width="7" height="5" viewBox="0 0 7 5"><path d="M0.9 3.9L3.3 1.4L5.7 3.9" fill="none" stroke="#0096e6" stroke-width="1.5"/></svg>
<div class="t" style="left:57.60px;top:891.00px;font-size:7.9px;color:#333;font-weight:bold;">RFC #</div>
<div class="t" style="left:108.30px;top:891.00px;font-size:7.9px;color:#333;font-weight:bold;">Subject</div>
<div class="t" style="left:333.50px;top:891.00px;font-size:7.9px;color:#333;font-weight:bold;">Impact Level</div>
<div class="t" style="left:407.20px;top:891.00px;font-size:7.9px;color:#333;font-weight:bold;">Risk Level</div>
<div class="t" style="left:481.20px;top:891.00px;font-size:7.9px;color:#333;font-weight:bold;">Status</div>
<div class="t" style="left:555.50px;top:891.00px;font-size:7.9px;color:#333;font-weight:bold;">Priority</div>
<div class="t" style="left:629.10px;top:891.00px;font-size:7.9px;color:#333;font-weight:bold;">Start Date</div>
<div style="position:absolute;left:29.00px;top:905.00px;width:736.00px;height:1.00px;background:#707070;"></div>
<div style="position:absolute;left:29.00px;top:904.00px;width:736.00px;height:1.00px;background:#e4e4e4;"></div>
<div style="position:absolute;left:29.00px;top:906.00px;width:736.00px;height:1.00px;background:#d6d6d6;"></div>
<div style="position:absolute;left:32.00px;top:911.00px;width:12px;height:12px;box-sizing:border-box;border:1px solid #d9d9d9;background:#fff"></div>
<svg style="position:absolute;left:34.00px;top:913.00px" width="8" height="8" viewBox="0 0 8 8"><path d="M4 0.5V7.5M0.5 4H7.5" stroke="#0a8ee0" stroke-width="1.7"/></svg>
<div class="t" style="left:55.20px;top:914.00px;font-size:8.2px;color:#0096e6;">107</div>
<div class="t" style="left:105.40px;top:914.00px;font-size:8.2px;color:#3a3a3a;">Remap all SunOS testers (Duo, Quartet, Vista Vision,...</div>
<div class="t" style="left:333.50px;top:914.00px;font-size:8.2px;color:#3a3a3a;">Medium</div>
<div class="t" style="left:407.20px;top:914.00px;font-size:8.2px;color:#3a3a3a;">Significant</div>
<div class="t" style="left:481.20px;top:914.00px;font-size:8.2px;color:#3a3a3a;">WIP</div>
<div class="t" style="left:555.50px;top:914.00px;font-size:8.2px;color:#3a3a3a;">Medium</div>
<div class="t" style="left:629.10px;top:914.00px;font-size:8.2px;color:#3a3a3a;">Tue, Oct 26, 2021 10:00a</div>
<div style="position:absolute;left:29.00px;top:927.00px;width:736.00px;height:1.00px;background:#e3e3e3;"></div>
<div style="position:absolute;left:29.00px;top:928.00px;width:736.00px;height:1.00px;background:#f1f1f1;"></div>
<div style="position:absolute;left:32.00px;top:933.63px;width:12px;height:12px;box-sizing:border-box;border:1px solid #d9d9d9;background:#fff"></div>
<svg style="position:absolute;left:34.00px;top:935.63px" width="8" height="8" viewBox="0 0 8 8"><path d="M4 0.5V7.5M0.5 4H7.5" stroke="#0a8ee0" stroke-width="1.7"/></svg>
<div class="t" style="left:55.20px;top:937.00px;font-size:8.2px;color:#0096e6;">145</div>
<div class="t" style="left:105.40px;top:937.00px;font-size:8.2px;color:#3a3a3a;">Deploying new pick label template for the warehous...</div>
<div class="t" style="left:333.50px;top:937.00px;font-size:8.2px;color:#3a3a3a;">High</div>
<div class="t" style="left:407.20px;top:937.00px;font-size:8.2px;color:#3a3a3a;">Minor</div>
<div class="t" style="left:481.20px;top:937.00px;font-size:8.2px;color:#3a3a3a;">Closed</div>
<div class="t" style="left:555.50px;top:937.00px;font-size:8.2px;color:#3a3a3a;">Emergency</div>
<div class="t" style="left:629.10px;top:937.00px;font-size:8.2px;color:#3a3a3a;">Wed, Sep 15, 2021 8:00a</div>
<div style="position:absolute;left:29.00px;top:950.00px;width:736.00px;height:1.00px;background:#e3e3e3;"></div>
<div style="position:absolute;left:29.00px;top:951.00px;width:736.00px;height:1.00px;background:#f1f1f1;"></div>
<div style="position:absolute;left:32.00px;top:956.26px;width:12px;height:12px;box-sizing:border-box;border:1px solid #d9d9d9;background:#fff"></div>
<svg style="position:absolute;left:34.00px;top:958.26px" width="8" height="8" viewBox="0 0 8 8"><path d="M4 0.5V7.5M0.5 4H7.5" stroke="#0a8ee0" stroke-width="1.7"/></svg>
<div class="t" style="left:55.20px;top:959.00px;font-size:8.2px;color:#0096e6;">151</div>
<div class="t" style="left:105.40px;top:959.00px;font-size:8.2px;color:#3a3a3a;">EComm - List Management Enhancement. ability to ...</div>
<div class="t" style="left:333.50px;top:959.00px;font-size:8.2px;color:#3a3a3a;">Medium</div>
<div class="t" style="left:407.20px;top:959.00px;font-size:8.2px;color:#3a3a3a;">Significant</div>
<div class="t" style="left:481.20px;top:959.00px;font-size:8.2px;color:#3a3a3a;">Closed</div>
<div class="t" style="left:555.50px;top:959.00px;font-size:8.2px;color:#3a3a3a;">Medium</div>
<div class="t" style="left:629.10px;top:959.00px;font-size:8.2px;color:#3a3a3a;">Mon, Sep 13, 2021 8:00a</div>
<div style="position:absolute;left:29.00px;top:972.00px;width:736.00px;height:1.00px;background:#e3e3e3;"></div>
<div style="position:absolute;left:29.00px;top:973.00px;width:736.00px;height:1.00px;background:#f1f1f1;"></div>
<div style="position:absolute;left:32.00px;top:978.89px;width:12px;height:12px;box-sizing:border-box;border:1px solid #d9d9d9;background:#fff"></div>
<svg style="position:absolute;left:34.00px;top:980.89px" width="8" height="8" viewBox="0 0 8 8"><path d="M4 0.5V7.5M0.5 4H7.5" stroke="#0a8ee0" stroke-width="1.7"/></svg>
<div class="t" style="left:55.20px;top:982.00px;font-size:8.2px;color:#0096e6;">152</div>
<div class="t" style="left:105.40px;top:982.00px;font-size:8.2px;color:#3a3a3a;">Upgrade Aruba 7005 controllers globally to version ...</div>
<div class="t" style="left:333.50px;top:982.00px;font-size:8.2px;color:#3a3a3a;">Medium</div>
<div class="t" style="left:407.20px;top:982.00px;font-size:8.2px;color:#3a3a3a;">Minor</div>
<div class="t" style="left:481.20px;top:982.00px;font-size:8.2px;color:#3a3a3a;">Pending</div>
<div class="t" style="left:555.50px;top:982.00px;font-size:8.2px;color:#3a3a3a;">Planned</div>
<div class="t" style="left:629.10px;top:982.00px;font-size:8.2px;color:#3a3a3a;">Tue, Oct 12, 2021 10:00a</div>
<div style="position:absolute;left:29.00px;top:995.00px;width:736.00px;height:1.00px;background:#e3e3e3;"></div>
<div style="position:absolute;left:29.00px;top:996.00px;width:736.00px;height:1.00px;background:#f1f1f1;"></div>
<div style="position:absolute;left:32.00px;top:1001.52px;width:12px;height:12px;box-sizing:border-box;border:1px solid #d9d9d9;background:#fff"></div>
<svg style="position:absolute;left:34.00px;top:1003.52px" width="8" height="8" viewBox="0 0 8 8"><path d="M4 0.5V7.5M0.5 4H7.5" stroke="#0a8ee0" stroke-width="1.7"/></svg>
<div class="t" style="left:55.20px;top:1004.00px;font-size:8.2px;color:#0096e6;">155</div>
<div class="t" style="left:105.40px;top:1004.00px;font-size:8.2px;color:#3a3a3a;">Steps for moving the remaining Home directories fro...</div>
<div class="t" style="left:333.50px;top:1004.00px;font-size:8.2px;color:#3a3a3a;">Low</div>
<div class="t" style="left:407.20px;top:1004.00px;font-size:8.2px;color:#3a3a3a;">Minor</div>
<div class="t" style="left:481.20px;top:1004.00px;font-size:8.2px;color:#3a3a3a;">Pending</div>
<div class="t" style="left:555.50px;top:1004.00px;font-size:8.2px;color:#3a3a3a;">Medium</div>
<div class="t" style="left:629.10px;top:1004.00px;font-size:8.2px;color:#3a3a3a;">Tue, Nov 2, 2021 9:00p</div>
<div style="position:absolute;left:29.00px;top:1018.00px;width:736.00px;height:1.00px;background:#e3e3e3;"></div>
<div style="position:absolute;left:29.00px;top:1019.00px;width:736.00px;height:1.00px;background:#f1f1f1;"></div>
<div style="position:absolute;left:32.00px;top:1024.15px;width:12px;height:12px;box-sizing:border-box;border:1px solid #d9d9d9;background:#fff"></div>
<svg style="position:absolute;left:34.00px;top:1026.15px" width="8" height="8" viewBox="0 0 8 8"><path d="M4 0.5V7.5M0.5 4H7.5" stroke="#0a8ee0" stroke-width="1.7"/></svg>
<div class="t" style="left:55.20px;top:1027.00px;font-size:8.2px;color:#0096e6;">156</div>
<div class="t" style="left:105.40px;top:1027.00px;font-size:8.2px;color:#3a3a3a;">Update ADSelfservice plus (self serve password cha...</div>
<div class="t" style="left:333.50px;top:1027.00px;font-size:8.2px;color:#3a3a3a;">Medium</div>
<div class="t" style="left:407.20px;top:1027.00px;font-size:8.2px;color:#3a3a3a;">Minor</div>
<div class="t" style="left:481.20px;top:1027.00px;font-size:8.2px;color:#3a3a3a;">Rejected</div>
<div class="t" style="left:555.50px;top:1027.00px;font-size:8.2px;color:#3a3a3a;">Planned</div>
<div class="t" style="left:629.10px;top:1027.00px;font-size:8.2px;color:#3a3a3a;">Sun, Sep 19, 2021 10:00a</div>
<div style="position:absolute;left:29.00px;top:1040.00px;width:736.00px;height:1.00px;background:#e3e3e3;"></div>
<div style="position:absolute;left:29.00px;top:1041.00px;width:736.00px;height:1.00px;background:#f1f1f1;"></div>
<div style="position:absolute;left:32.00px;top:1046.78px;width:12px;height:12px;box-sizing:border-box;border:1px solid #d9d9d9;background:#fff"></div>
<svg style="position:absolute;left:34.00px;top:1048.78px" width="8" height="8" viewBox="0 0 8 8"><path d="M4 0.5V7.5M0.5 4H7.5" stroke="#0a8ee0" stroke-width="1.7"/></svg>
<div class="t" style="left:55.20px;top:1050.00px;font-size:8.2px;color:#0096e6;">157</div>
<div class="t" style="left:105.40px;top:1050.00px;font-size:8.2px;color:#3a3a3a;">Emergency reboot of the SMTP server Note: this will...</div>
<div class="t" style="left:333.50px;top:1050.00px;font-size:8.2px;color:#3a3a3a;">Low</div>
<div class="t" style="left:407.20px;top:1050.00px;font-size:8.2px;color:#3a3a3a;">Minor</div>
<div class="t" style="left:481.20px;top:1050.00px;font-size:8.2px;color:#3a3a3a;">Closed</div>
<div class="t" style="left:555.50px;top:1050.00px;font-size:8.2px;color:#3a3a3a;">Emergency</div>
<div class="t" style="left:629.10px;top:1050.00px;font-size:8.2px;color:#3a3a3a;">Wed, Sep 15, 2021 5:30p</div>
<div style="position:absolute;left:29.00px;top:1063.00px;width:736.00px;height:1.00px;background:#e3e3e3;"></div>
<div style="position:absolute;left:29.00px;top:1064.00px;width:736.00px;height:1.00px;background:#f1f1f1;"></div>
<div style="position:absolute;left:32.00px;top:1069.41px;width:12px;height:12px;box-sizing:border-box;border:1px solid #d9d9d9;background:#fff"></div>
<svg style="position:absolute;left:34.00px;top:1071.41px" width="8" height="8" viewBox="0 0 8 8"><path d="M4 0.5V7.5M0.5 4H7.5" stroke="#0a8ee0" stroke-width="1.7"/></svg>
<div class="t" style="left:55.20px;top:1072.00px;font-size:8.2px;color:#0096e6;">158</div>
<div class="t" style="left:105.40px;top:1072.00px;font-size:8.2px;color:#3a3a3a;">Install and Run the Epicor Upgrade Analyzer tool on ...</div>
<div class="t" style="left:333.50px;top:1072.00px;font-size:8.2px;color:#3a3a3a;">High</div>
<div class="t" style="left:407.20px;top:1072.00px;font-size:8.2px;color:#3a3a3a;">Routine</div>
<div class="t" style="left:481.20px;top:1072.00px;font-size:8.2px;color:#3a3a3a;">Closed</div>
<div class="t" style="left:555.50px;top:1072.00px;font-size:8.2px;color:#3a3a3a;">High</div>
<div class="t" style="left:629.10px;top:1072.00px;font-size:8.2px;color:#3a3a3a;">Sat, Sep 25, 2021 4:00p</div>
<div style="position:absolute;left:29.00px;top:1101.00px;width:736.00px;height:1.00px;background:#e0e0e0;"></div>
<div style="position:absolute;left:29.00px;top:1102.00px;width:736.00px;height:1.00px;background:#f0f0f0;"></div>
<div class="t" style="left:29.50px;top:1108.00px;font-size:9.9px;color:#222;">1 - 8 of 26 items</div>
<div class="t" style="left:646.70px;top:1109.00px;font-size:9.3px;color:#8a8a8a;">Previous</div>
<div class="t" style="left:691.30px;top:1109.00px;font-size:9.3px;color:#555;">1</div>
<div class="t" style="left:703.70px;top:1109.00px;font-size:9.3px;color:#0096e6;">2</div>
<div class="t" style="left:717.00px;top:1109.00px;font-size:9.3px;color:#0096e6;">3</div>
<div class="t" style="left:729.70px;top:1109.00px;font-size:9.3px;color:#0096e6;">4</div>
<div class="t" style="left:742.70px;top:1109.00px;font-size:9.3px;color:#0096e6;">Next</div>
<div class="t" style="left:97.80px;width:600px;text-align:center;top:1134.00px;font-size:9.55px;color:#222;font-style:italic;">(Change Requests scheduled or unscheduled in the past 30 and next 30 days.)</div>
<div class="t" style="left:793.40px;top:760.00px;font-size:12.6px;color:#333;-webkit-text-stroke:0.45px #333;">RFCs awaiting approval</div>
<div style="position:absolute;left:1102.40px;top:756.10px;width:145.20px;height:19.20px;border:1px solid #d6d6d6;box-sizing:border-box;background:#fff;"></div>
<div class="t" style="left:1108.70px;top:761.00px;font-size:9.5px;color:#777;">Enter search keywords</div>
<svg style="position:absolute;left:1260.00px;top:762.00px" width="10" height="9" viewBox="0 0 10 9"><path d="M0 0H9.2V1L5.9 4.4V8.8L3.4 7.3V4.4L0 1Z" fill="#555"/></svg>
<div class="t" style="left:818.80px;top:785.00px;font-size:7.9px;color:#0096e6;font-weight:bold;">RFC #</div>
<svg style="position:absolute;left:845.00px;top:784.50px" width="7" height="5" viewBox="0 0 7 5"><path d="M0.9 3.9L3.3 1.4L5.7 3.9" fill="none" stroke="#0096e6" stroke-width="1.5"/></svg>
<div class="t" style="left:869.40px;top:785.00px;font-size:7.9px;color:#333;font-weight:bold;">Subject</div>
<div class="t" style="left:1064.60px;top:785.00px;font-size:7.9px;color:#333;font-weight:bold;">Status</div>
<div class="t" style="left:1138.80px;top:785.00px;font-size:7.9px;color:#333;font-weight:bold;">Start Date</div>
<div style="position:absolute;left:793.00px;top:799.00px;width:481.50px;height:1.00px;background:#707070;"></div>
<div style="position:absolute;left:793.00px;top:798.00px;width:481.50px;height:1.00px;background:#e4e4e4;"></div>
<div style="position:absolute;left:793.00px;top:800.00px;width:481.50px;height:1.00px;background:#d6d6d6;"></div>
<div style="position:absolute;left:796.00px;top:804.60px;width:12px;height:12px;box-sizing:border-box;border:1px solid #d9d9d9;background:#fff"></div>
<svg style="position:absolute;left:798.00px;top:806.60px" width="8" height="8" viewBox="0 0 8 8"><path d="M4 0.5V7.5M0.5 4H7.5" stroke="#0a8ee0" stroke-width="1.7"/></svg>
<div class="t" style="left:818.80px;top:808.00px;font-size:8.2px;color:#0096e6;">152</div>
<div class="t" style="left:869.40px;top:808.00px;font-size:8.2px;color:#3a3a3a;">Upgrade Aruba 7005 controllers globally to ...</div>
<div class="t" style="left:1064.60px;top:808.00px;font-size:8.2px;color:#3a3a3a;">Pending</div>
<div class="t" style="left:1138.80px;top:808.00px;font-size:8.2px;color:#3a3a3a;">Tue, Oct 12, 2021 10:00a EDT</div>
<div style="position:absolute;left:796.00px;top:827.10px;width:12px;height:12px;box-sizing:border-box;border:1px solid #d9d9d9;background:#fff"></div>
<svg style="position:absolute;left:798.00px;top:829.10px" width="8" height="8" viewBox="0 0 8 8"><path d="M4 0.5V7.5M0.5 4H7.5" stroke="#0a8ee0" stroke-width="1.7"/></svg>
<div class="t" style="left:818.80px;top:830.00px;font-size:8.2px;color:#0096e6;">155</div>
<div class="t" style="left:869.40px;top:830.00px;font-size:8.2px;color:#3a3a3a;">Steps for moving the remaining Home direct...</div>
<div class="t" style="left:1064.60px;top:830.00px;font-size:8.2px;color:#3a3a3a;">Pending</div>
<div class="t" style="left:1138.80px;top:830.00px;font-size:8.2px;color:#3a3a3a;">Tue, Nov 2, 2021 9:00p EDT</div>
<div style="position:absolute;left:793.00px;top:821.00px;width:481.50px;height:1.00px;background:#e3e3e3;"></div>
<div style="position:absolute;left:793.00px;top:822.00px;width:481.50px;height:1.00px;background:#f1f1f1;"></div>
<div style="position:absolute;left:793.00px;top:1019.00px;width:481.50px;height:1.00px;background:#e0e0e0;"></div>
<div style="position:absolute;left:793.00px;top:1020.00px;width:481.50px;height:1.00px;background:#f0f0f0;"></div>
<div class="t" style="left:793.70px;top:1026.00px;font-size:9.9px;color:#222;">1 - 2 of 2 items</div>
<div class="t" style="left:1195.20px;top:1027.00px;font-size:9.3px;color:#8a8a8a;">Previous</div>
<div class="t" style="left:1239.90px;top:1027.00px;font-size:9.3px;color:#8a8a8a;">1</div>
<div class="t" style="left:1252.20px;top:1027.00px;font-size:9.3px;color:#8a8a8a;">Next</div>
<div style="position:absolute;left:19.00px;top:1172.50px;width:1265.00px;height:1.20px;background:#e3e3e6;"></div>
<div class="t" style="left:351.60px;width:600px;text-align:center;top:1185.00px;font-size:8.4px;color:#666;">© 2021 Giva, Inc.</div>
</body></html>
